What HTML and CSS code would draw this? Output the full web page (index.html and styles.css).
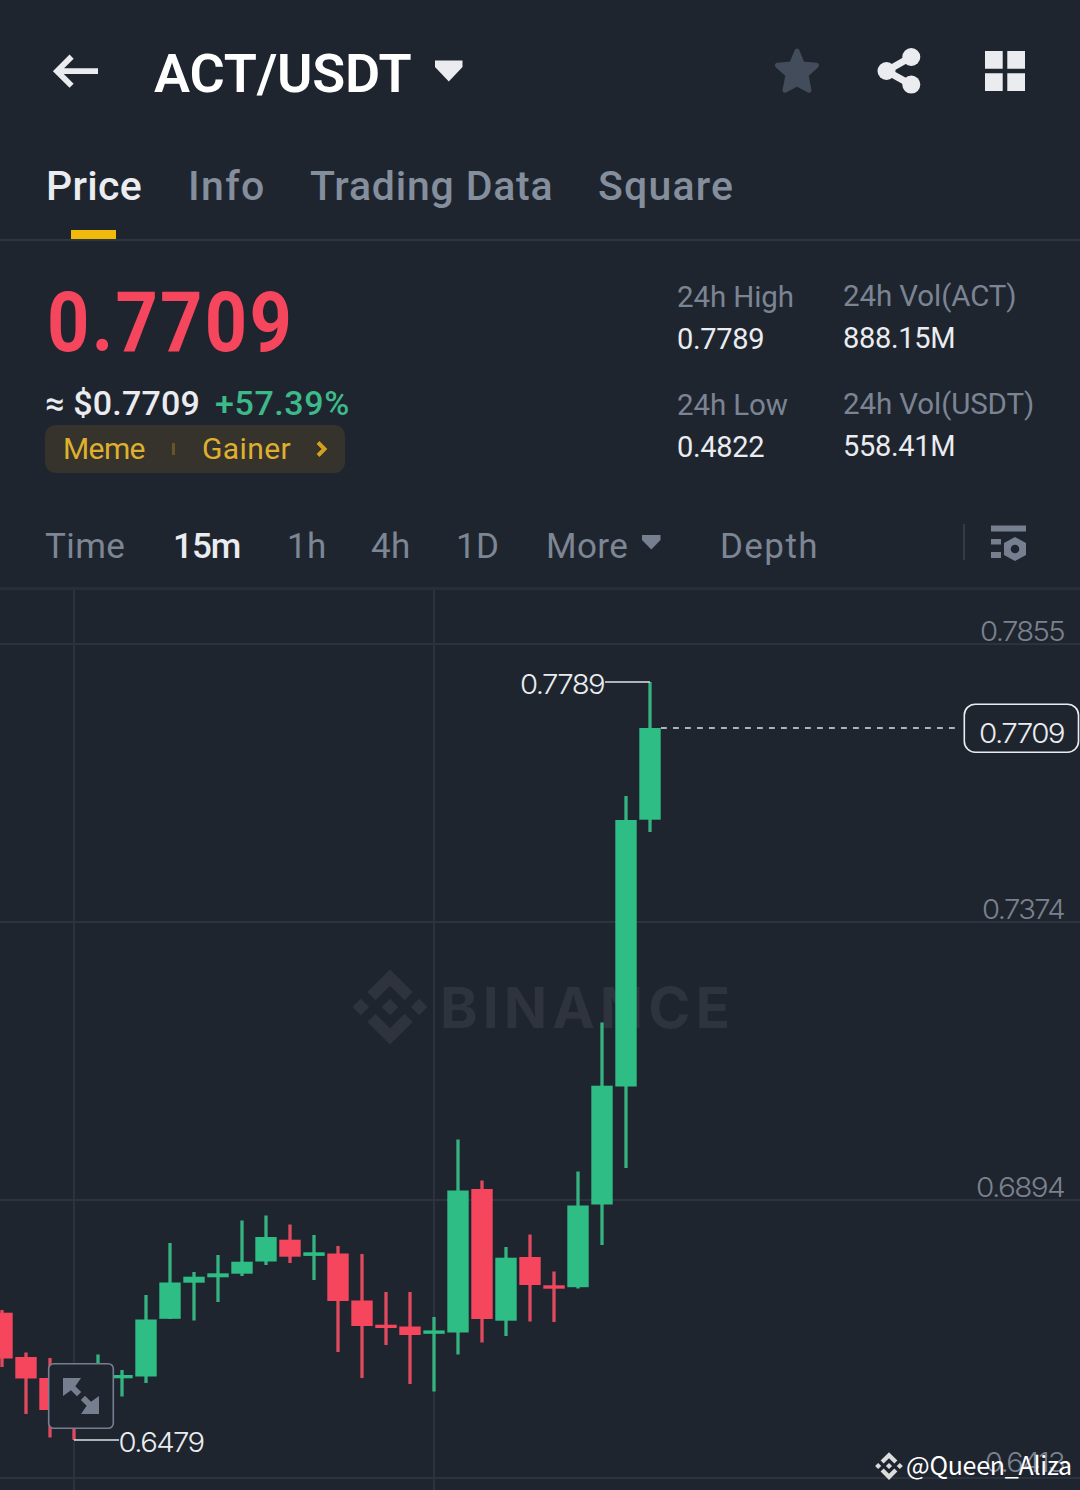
FILE: index.html
```html
<!DOCTYPE html>
<html lang="en">
<head>
<meta charset="utf-8">
<title>ACT/USDT</title>
<link rel="stylesheet" href="styles.css">
</head>
<body>
<div class="screen">
  <header class="topbar">
    <svg class="back" width="48" height="40" viewBox="0 0 48 40"><path d="M20.600 5.600 6 20.200 20.600 34.800M6.500 20.200H47" fill="none" stroke="#eaecef" stroke-width="5.800"/></svg>
    <h1 class="pair">ACT/USDT</h1>
    <svg class="pair-caret" width="28" height="22" viewBox="0 0 28 22"><path d="M0 .5H27.500V7L13.800 21.500 0 7Z" fill="#eaecef"/></svg>
    <div class="actions">
      <svg width="46" height="48" viewBox="0 0 46 48"><path d="M23 4 28.300 16.900 42.500 18.300 32 28 35 43.200 23 36.700 11 43.200 14 28 3.500 18.300 17.700 16.900Z" fill="#434c5a" stroke="#434c5a" stroke-width="5" stroke-linejoin="round"/></svg>
      <svg width="44" height="48" viewBox="0 0 44 48"><g fill="#eaecef"><circle cx="9.500" cy="24" r="9"/><circle cx="34.300" cy="10" r="9"/><circle cx="34.300" cy="37.600" r="9"/></g><path d="M34 10 9.500 24 34 37.600" fill="none" stroke="#eaecef" stroke-width="7"/></svg>
      <svg width="40" height="40" viewBox="0 0 40 40"><path d="M0 0H17.700V17.700H0ZM22.300 0H40V17.700H22.300ZM0 22.300H17.700V40H0ZM22.300 22.300H40V40H22.300Z" fill="#eaecef"/></svg>
    </div>
  </header>

  <nav class="tabs">
    <a class="tab tab-price active">Price</a>
    <a class="tab tab-info">Info</a>
    <a class="tab tab-data">Trading Data</a>
    <a class="tab tab-square">Square</a>
  </nav>

  <section class="summary">
    <div class="quote">
      <div class="last"><span class="din">0.7709</span></div>
      <div class="fiat"><span class="approx">≈ $0.7709</span><span class="change">+57.39%</span></div>
      <div class="tags">
        <span class="tag-meme">Meme</span><i class="tag-sep"></i><span class="tag-gainer">Gainer</span>
        <svg width="12" height="18" viewBox="0 0 12 18"><path d="M2 2.500 8.500 9 2 15.500" fill="none" stroke="#d3a01f" stroke-width="4"/></svg>
      </div>
    </div>
    <dl class="stats">
      <div class="stat"><dt>24h High</dt><dd>0.7789</dd></div>
      <div class="stat right"><dt>24h Vol(ACT)</dt><dd>888.15M</dd></div>
      <div class="stat"><dt>24h Low</dt><dd>0.4822</dd></div>
      <div class="stat right"><dt>24h Vol(USDT)</dt><dd>558.41M</dd></div>
    </dl>
  </section>

  <nav class="intervals">
    <a>Time</a><a class="active">15m</a><a>1h</a><a>4h</a><a>1D</a>
    <a>More<svg class="more-caret" width="19" height="15" viewBox="0 0 19 15"><path d="M0 0H18.500V5L9.300 14.500 0 5Z" fill="#767f8f"/></svg></a>
    <a class="depth">Depth</a>
    <span class="settings">
      <svg width="36" height="38" viewBox="0 0 36 38"><g fill="#767f8f"><path d="M0 1.500H35V7.500H0ZM0 15H10V20.500H0ZM0 28H10V34H0Z"/><path fill-rule="evenodd" d="M24 13 35 19V31L24 37 13 31V19ZM24 20.700A4.300 4.300 0 1 0 24 29.300 4.300 4.300 0 1 0 24 20.700Z"/></g></svg>
    </span>
  </nav>

  <svg class="chart" width="1080" height="900" viewBox="0 590 1080 900">
    <defs>
      <path id="logo" d="M0-37.500 22.700-15 14.500-6.800 0-21.200-14.500-6.800-22.700-15ZM0-8.300 8.300 0 0 8.300-8.300 0ZM-29.200-8.300-21 0-29.200 8.300-37.500 0ZM29.200-8.300 37.500 0 29.200 8.300 21 0ZM0 37.500 22.700 15 14.500 6.800 0 21.200-14.500 6.800-22.700 15Z"/>
    </defs>
    <path class="grid" d="M0 644H1080M0 922H1080M0 1200H1080M0 1478H1080M74 590V1490M434 590V1490"/>
    <g class="brand">
      <use href="#logo" x="390" y="1007"/>
      <text x="440" y="1027.500" textLength="290">BINANCE</text>
    </g>
    <g class="axis">
      <text x="980" y="641" textLength="84" lengthAdjust="spacingAndGlyphs">0.7855</text>
      <text x="982" y="919" textLength="82" lengthAdjust="spacingAndGlyphs">0.7374</text>
      <text x="976" y="1197" textLength="88" lengthAdjust="spacingAndGlyphs">0.6894</text>
      <text x="985" y="1472" textLength="79" lengthAdjust="spacingAndGlyphs">0.6413</text>
    </g>
    <path class="wick down" d="M2 1310V1367M26 1352.500V1414M50 1358V1437.500M74 1390V1440M290 1224.500V1263M338 1246V1352M362 1254V1378M386 1292V1345M410 1292V1384M482 1180.500V1342.500M530 1234.500V1321.500M554 1271.500V1322"/>
    <path class="wick up" d="M98 1354.500V1380M122 1370V1396.500M146 1295V1383M170 1243V1319M194 1272V1320.500M218 1255V1302M242 1220.500V1276M266 1215.500V1265M314 1235V1280M434 1317V1391.500M458 1139.500V1354.500M506 1247V1336M578 1171.500V1288.500M602 1022.500V1245M626 796V1168M650 682V832"/>
    <g class="down">
      <rect x="-8.700" y="1312.700" width="21.400" height="45.800"/>
      <rect x="15.300" y="1357" width="21.400" height="21.500"/>
      <rect x="39.300" y="1378" width="21.400" height="32"/>
      <rect x="279.300" y="1239.700" width="21.400" height="17"/>
      <rect x="327.300" y="1253.500" width="21.400" height="47.500"/>
      <rect x="351.300" y="1300.500" width="21.400" height="25.500"/>
      <rect x="375.300" y="1324.700" width="21.400" height="3.300"/>
      <rect x="399.300" y="1326.500" width="21.400" height="8.500"/>
      <rect x="471.300" y="1189" width="21.400" height="130"/>
      <rect x="519.300" y="1257" width="21.400" height="28"/>
      <rect x="543.300" y="1285.300" width="21.400" height="3.400"/>
    </g>
    <g class="up">
      <rect x="111.300" y="1375" width="21.400" height="3.300"/>
      <rect x="135.300" y="1319.500" width="21.400" height="57"/>
      <rect x="159.300" y="1282.500" width="21.400" height="36.300"/>
      <rect x="183.300" y="1276.700" width="21.400" height="6"/>
      <rect x="207.300" y="1273.300" width="21.400" height="4"/>
      <rect x="231.300" y="1261.700" width="21.400" height="12"/>
      <rect x="255.300" y="1237" width="21.400" height="24.500"/>
      <rect x="303.300" y="1252.300" width="21.400" height="3.600"/>
      <rect x="423.300" y="1330.400" width="21.400" height="3.400"/>
      <rect x="447.300" y="1190.500" width="21.400" height="142"/>
      <rect x="495.300" y="1257.700" width="21.400" height="63"/>
      <rect x="567.300" y="1205.500" width="21.400" height="81.700"/>
      <rect x="591.300" y="1085.700" width="21.400" height="118.800"/>
      <rect x="615.300" y="820" width="21.400" height="266.500"/>
      <rect x="639.300" y="728" width="21.400" height="91.700"/>
    </g>
    <path class="leader" d="M605 682H650M74 1440H119"/>
    <path class="leader dashed" d="M661 728H956"/>
    <rect class="price-tag" x="964.300" y="704.200" width="114.200" height="48" rx="11"/>
    <g class="marks">
      <text x="979" y="743" textLength="85" lengthAdjust="spacingAndGlyphs">0.7709</text>
      <text x="520" y="694" textLength="84" lengthAdjust="spacingAndGlyphs">0.7789</text>
      <text x="118.500" y="1452" textLength="85" lengthAdjust="spacingAndGlyphs">0.6479</text>
    </g>
    <rect class="expand" x="48.700" y="1363.700" width="64.600" height="64.600" rx="5"/>
    <path fill="#767f8f" d="M63 1378H81L75.300 1386.200 81.200 1392 77 1396.300 71 1390.300 63 1396ZM99 1414H81L86.700 1405.800 80.800 1400 85 1395.700 91 1401.700 99 1396Z"/>
    <g class="author">
      <use href="#logo" transform="translate(889 1466) scale(.37)"/>
      <text x="906" y="1475" textLength="166">@Queen_Aliza</text>
    </g>
  </svg>
</div>
</body>
</html>
```
FILE: styles.css
```css
* { box-sizing: border-box; }

body {
  margin: 0;
  background: #1f252f;
  font-family: Roboto, "Liberation Sans", sans-serif;
  color: #eaecef;
}

.screen { width: 1080px; height: 1490px; overflow: hidden; }
svg { display: block; flex: none; }

.topbar {
  display: flex;
  align-items: center;
  height: 145px;
  padding: 0 55px 0 51px;
}
.back { margin-bottom: 3px; }
.pair {
  width: 281px;
  margin: 2px 0 0 55px;
  font-size: 54px;
  font-weight: 600;
  line-height: 70px;
  color: #fff;
  letter-spacing: -.2px;
}
.pair-caret { margin-bottom: 3px; }
.actions {
  display: flex;
  align-items: center;
  margin: 0 0 3px auto;
}
.actions svg:nth-child(2) { margin: 0 64px 0 57px; }

.tabs {
  display: flex;
  height: 96px;
  padding-left: 46px;
  border-bottom: 2px solid #303641;
  font-size: 41px;
  font-weight: 500;
  line-height: 82px;
  color: #848e9c;
}
.tab { white-space: nowrap; }
.tab-price { width: 142px; letter-spacing: .3px; }
.tab-info { width: 122px; letter-spacing: 1.4px; }
.tab-data { width: 288px; letter-spacing: .8px; }
.tab-square { letter-spacing: 1.2px; }
.tab.active { color: #eaecef; }
.tab.active::after {
  content: "";
  display: block;
  width: 45px;
  height: 9px;
  margin: 3px 0 0 25px;
  background: #f0b90b;
}

.summary {
  display: flex;
  justify-content: space-between;
  height: 263px;
  padding: 35px 36px 0 45px;
}
.quote { padding-top: 5px; }
.last {
  height: 84px;
  padding-left: 2px;
  font-size: 84px;
  font-weight: 700;
  line-height: 84px;
  color: #f6465d;
}
.din {
  display: inline-block;
  transform: scaleX(.88);
  transform-origin: left;
  letter-spacing: 2.600px;
}
.fiat {
  display: flex;
  margin-top: 18px;
  font-size: 34px;
  font-weight: 500;
  line-height: 40px;
  letter-spacing: .2px;
}
.approx { width: 170px; }
.change { color: #3dba8a; letter-spacing: .6px; }
.tags {
  display: flex;
  align-items: center;
  width: 300px;
  height: 48px;
  margin-top: 2px;
  padding-left: 18px;
  border-radius: 11px;
  background: #35332c;
  font-size: 30px;
  line-height: 50px;
  color: #dfb02f;
}
.tag-meme { width: 109px; letter-spacing: -.6px; }
.tag-sep { width: 3px; height: 12px; background: #675524; }
.tag-gainer { width: 114px; margin-left: 27px; letter-spacing: .4px; }

.stats {
  display: grid;
  flex: none;
  grid-template-columns: 166px 201px;
  grid-auto-rows: 84px;
  row-gap: 24px;
  margin: 0;
  white-space: nowrap;
}
.right { margin-top: -1px; }
.stats dt {
  font-size: 29.500px;
  line-height: 42px;
  letter-spacing: -.1px;
  color: #7b8493;
}
.stats dd {
  margin: 0;
  font-size: 29px;
  font-weight: 450;
  line-height: 42px;
  letter-spacing: -.3px;
}

.intervals {
  display: grid;
  grid-template-columns: 128px 114px 84px 85px 90px 174px 243px 1fr;
  align-items: center;
  height: 86px;
  padding-left: 45px;
  border-bottom: 3px solid #282e3a;
  font-size: 35px;
  line-height: 83px;
  color: #7d8694;
}
.intervals a {
  display: flex;
  align-items: center;
  height: 83px;
  padding-top: 1px;
  white-space: nowrap;
  letter-spacing: .4px;
}
.intervals .active { font-weight: 500; color: #eaecef; letter-spacing: -1px; }
.intervals .depth { letter-spacing: 1.400px; }
.more-caret { margin: 0 0 7px 14px; }
.settings {
  height: 36px;
  margin-top: -8px;
  padding-left: 26px;
  border-left: 2px solid #343b47;
}

.grid { stroke: #2d333e; stroke-width: 2; }
.brand { fill: #2e333e; }
.brand text { font: 700 57px Inter, sans-serif; }
.axis text, .marks text { font: 300 27px Inter, "Liberation Sans", sans-serif; letter-spacing: -1.500px; }
.axis { fill: #7b828e; }
.marks { fill: #eaecef; }
.up { fill: #2ebd85; }
.down { fill: #f6465d; }
.wick { stroke-width: 3.300; }
.wick.up { stroke: #35b280; }
.wick.down { stroke: #e04a5e; }
.leader { fill: none; stroke: #dfe1e5; stroke-width: 1.700; }
.dashed { stroke-dasharray: 5.800 6.200; }
.price-tag { fill: #1f252f; stroke: #eaecef; stroke-width: 1.600; }
.expand { fill: #1f252f; stroke: #767f8f; stroke-width: 1.600; }
.author { fill: #dcdcdc; }
.author text { fill: #fff; font: 400 25px "Noto Sans CJK SC", sans-serif; }
```
